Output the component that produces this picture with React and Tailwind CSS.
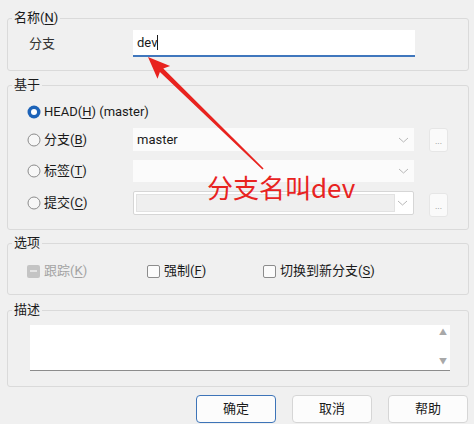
import React from 'react';

const font = { fontFamily: 'Roboto, "Noto Sans CJK SC", sans-serif' };

const Key = ({ k }) => (
  <>
    (<span className="underline underline-offset-2">{k}</span>)
  </>
);

const Group = ({ label, className = '', children }) => (
  <fieldset className={`border border-[#dadada] rounded-[3px] ${className}`}>
    <legend className="ml-[4px] px-[2px] text-[13px] leading-[16px] text-[#1a1a1a]">{label}</legend>
    {children}
  </fieldset>
);

const Radio = ({ checked }) => (
  <svg width="14" height="14" viewBox="0 0 14 14" className="shrink-0">
    {checked ? (
      <>
        <circle cx="7" cy="7" r="6.5" fill="#1d63b8" />
        <circle cx="7" cy="7" r="3" fill="#ffffff" />
      </>
    ) : (
      <circle cx="7" cy="7" r="6" fill="#f7f7f7" stroke="#8c8c8c" strokeWidth="1" />
    )}
  </svg>
);

const Chevron = () => (
  <svg width="11" height="6" viewBox="0 0 11 6" className="shrink-0">
    <path d="M1 1 L5.5 5 L10 1" fill="none" stroke="#b8b8b8" strokeWidth="1" />
  </svg>
);

const Dots = () => (
  <div className="w-[19px] h-[24px] rounded-[3px] border border-[#e6e6e6] bg-[#fafafa] flex items-end justify-center pb-[5px] text-[9px] leading-none text-[#8a8a8a]">
    ...
  </div>
);

const Checkbox = ({ disabled }) => (
  disabled ? (
    <div className="w-[13px] h-[13px] rounded-[2px] bg-[#c4c4c4] flex items-center justify-center shrink-0">
      <div className="w-[7px] h-[2px] bg-[#e4e4e4]" />
    </div>
  ) : (
    <div className="w-[13px] h-[13px] rounded-[2px] border border-[#8c8c8c] bg-[#fbfbfb] shrink-0" />
  )
);

export default function App() {
  return (
    <div className="relative w-[474px] h-[424px] overflow-hidden bg-[#f0f0f0] pl-[7px] pr-[5px] pt-[10px] text-[13px] text-[#1a1a1a]" style={font}>
      {/* 名称 */}
      <Group label={<>名称<Key k="N" /></>} className="pb-[13px]">
        <div className="flex items-center mt-[4px]">
          <span className="w-[125px] pl-[21px] text-[#333]">分支</span>
          <div className="w-[282px] h-[27px] bg-white border-b-2 border-[#4077bd] flex items-center pl-[4px]">
            dev<span className="w-px h-[15px] bg-[#1a1a1a]" />
          </div>
        </div>
      </Group>

      {/* 基于 */}
      <Group label="基于" className="mt-[6px] pb-[14px]">
        <div className="flex items-center gap-[3px] mt-[7px] h-[23px] pl-[19px]">
          <Radio checked />
          <span>HEAD<Key k="H" /> (master)</span>
        </div>
        <div className="flex items-center mt-[5px] h-[23px] pl-[19px]">
          <Radio />
          <span className="ml-[3px] w-[89px]">分支<Key k="B" /></span>
          <div className="w-[281px] h-[23px] bg-[#fbfbfb] flex items-center justify-between pl-[4px] pr-[5px]">
            <span>master</span>
            <Chevron />
          </div>
          <div className="ml-[15px]"><Dots /></div>
        </div>
        <div className="flex items-center mt-[9px] h-[22px] pl-[19px]">
          <Radio />
          <span className="ml-[3px] w-[89px]">标签<Key k="T" /></span>
          <div className="w-[281px] h-[22px] bg-[#fbfbfb] flex items-center justify-end pr-[5px]">
            <Chevron />
          </div>
        </div>
        <div className="flex items-center mt-[9px] h-[24px] pl-[19px]">
          <Radio />
          <span className="ml-[3px] w-[89px]">提交<Key k="C" /></span>
          <div className="w-[281px] h-[24px] bg-white border border-[#d6d6d6] rounded-[2px] flex items-center pl-[2px] pr-[5px]">
            <div className="w-[259px] h-[18px] bg-[#efefef] border border-[#e2e2e2]" />
            <div className="flex-1 flex justify-end"><Chevron /></div>
          </div>
          <div className="ml-[15px] mt-[3px]"><Dots /></div>
        </div>
      </Group>

      {/* 选项 */}
      <Group label="选项" className="mt-[5px] pb-[13px]">
        <div className="flex items-center mt-[10px] h-[20px] pl-[19px]">
          <div className="flex items-center gap-[4px] w-[120px] text-[#a3a3a3]">
            <Checkbox disabled />
            <span>跟踪<Key k="K" /></span>
          </div>
          <div className="flex items-center gap-[4px] w-[116px]">
            <Checkbox />
            <span>强制<Key k="F" /></span>
          </div>
          <div className="flex items-center gap-[4px]">
            <Checkbox />
            <span>切换到新分支<Key k="S" /></span>
          </div>
        </div>
      </Group>

      {/* 描述 */}
      <Group label="描述" className="mt-[7px] pb-[15px]">
        <div className="mt-[7px] ml-[22px] w-[420px] h-[46px] bg-white border-b border-[#8c8c8c] flex justify-end">
          <div className="w-[14px] flex flex-col items-center justify-between py-[4px] text-[8px] leading-none text-[#a8a8a8]">
            <span>▲</span>
            <span>▼</span>
          </div>
        </div>
      </Group>

      {/* 按钮 */}
      <div className="flex justify-end gap-[16px] mt-[8px] pr-[1px]">
        <button className="w-[80px] h-[28px] rounded-[4px] border border-[#3d74b8] bg-[#fcfcfc] text-[13px]">确定</button>
        <button className="w-[80px] h-[28px] rounded-[4px] border border-[#d6d6d6] bg-[#fcfcfc] text-[13px]">取消</button>
        <button className="w-[80px] h-[28px] rounded-[4px] border border-[#d6d6d6] bg-[#fcfcfc] text-[13px]">帮助</button>
      </div>

      {/* 标注 */}
      <svg className="absolute left-0 top-0 pointer-events-none" width="474" height="424" viewBox="0 0 474 424">
        <polygon
          points="148,57 170.1,66 163.3,68.5 263.6,168.4 262.4,169.6 159.9,72.1 157.5,78.8"
          fill="#e8231f"
        />
      </svg>
      <div className="absolute left-[207px] top-[170px] text-[26px] leading-[34px] text-[#e8231f] whitespace-nowrap" style={{ fontFamily: '"Noto Sans CJK SC", sans-serif' }}>
        分支名叫dev
      </div>
    </div>
  );
}
